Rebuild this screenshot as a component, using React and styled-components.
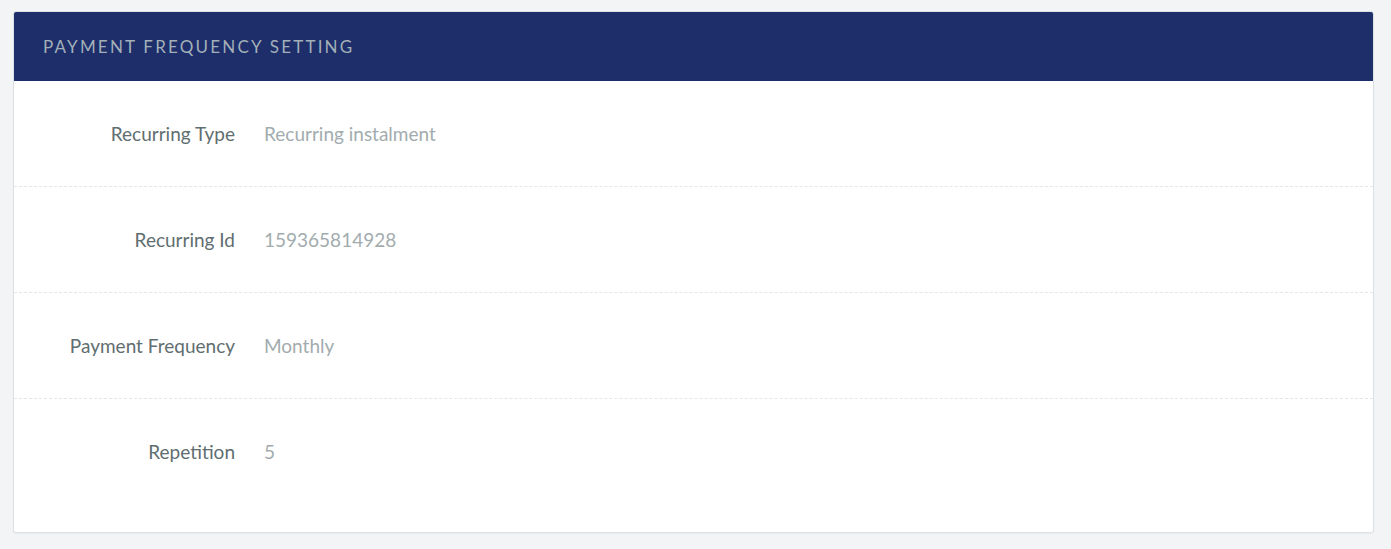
import React from 'react';
import styled, { createGlobalStyle } from 'styled-components';

const GlobalStyle = createGlobalStyle`
  *, *::before, *::after {
    box-sizing: border-box;
  }
  html, body {
    margin: 0;
    padding: 0;
    background: #f2f4f6;
    font-family: Lato, "Noto Sans", "Liberation Sans", sans-serif;
  }
`;

const Page = styled.div`
  padding: 11px 17px 15px 13px;
`;

const Card = styled.section`
  background: #ffffff;
  border: 1px solid #dce1e5;
  border-radius: 3px;
  overflow: hidden;
  box-shadow: 0 1px 2px rgba(0, 0, 0, 0.04);
`;

const Header = styled.header`
  background: #1d2e6b;
  height: 69px;
  display: flex;
  align-items: center;
  padding-left: 29px;
`;

const Title = styled.h2`
  margin: 0;
  font-size: 17px;
  font-weight: 400;
  letter-spacing: 2.2px;
  color: #a3b0b8;
  text-transform: uppercase;
`;

const List = styled.dl`
  margin: 0;
  padding-bottom: 27px;
`;

const Row = styled.div`
  display: grid;
  grid-template-columns: 221px 1fr;
  column-gap: 29px;
  align-items: center;
  height: 106px;
  padding-bottom: 1px;
  border-bottom: ${(p) => (p.last ? 'none' : '1px dashed #e3e7ea')};
`;

const Label = styled.dt`
  text-align: right;
  font-size: 19px;
  color: #5f6e70;
`;

const Value = styled.dd`
  margin: 0;
  font-size: 19px;
  color: #a2acae;
`;

const rows = [
  ['Recurring Type', 'Recurring instalment'],
  ['Recurring Id', '159365814928'],
  ['Payment Frequency', 'Monthly'],
  ['Repetition', '5'],
];

const App = () => (
  <>
    <GlobalStyle />
    <Page>
      <Card>
        <Header>
          <Title>Payment Frequency Setting</Title>
        </Header>
        <List>
          {rows.map(([label, value], i) => (
            <Row key={label} last={i === rows.length - 1}>
              <Label>{label}</Label>
              <Value>{value}</Value>
            </Row>
          ))}
        </List>
      </Card>
    </Page>
  </>
);

export default App;
